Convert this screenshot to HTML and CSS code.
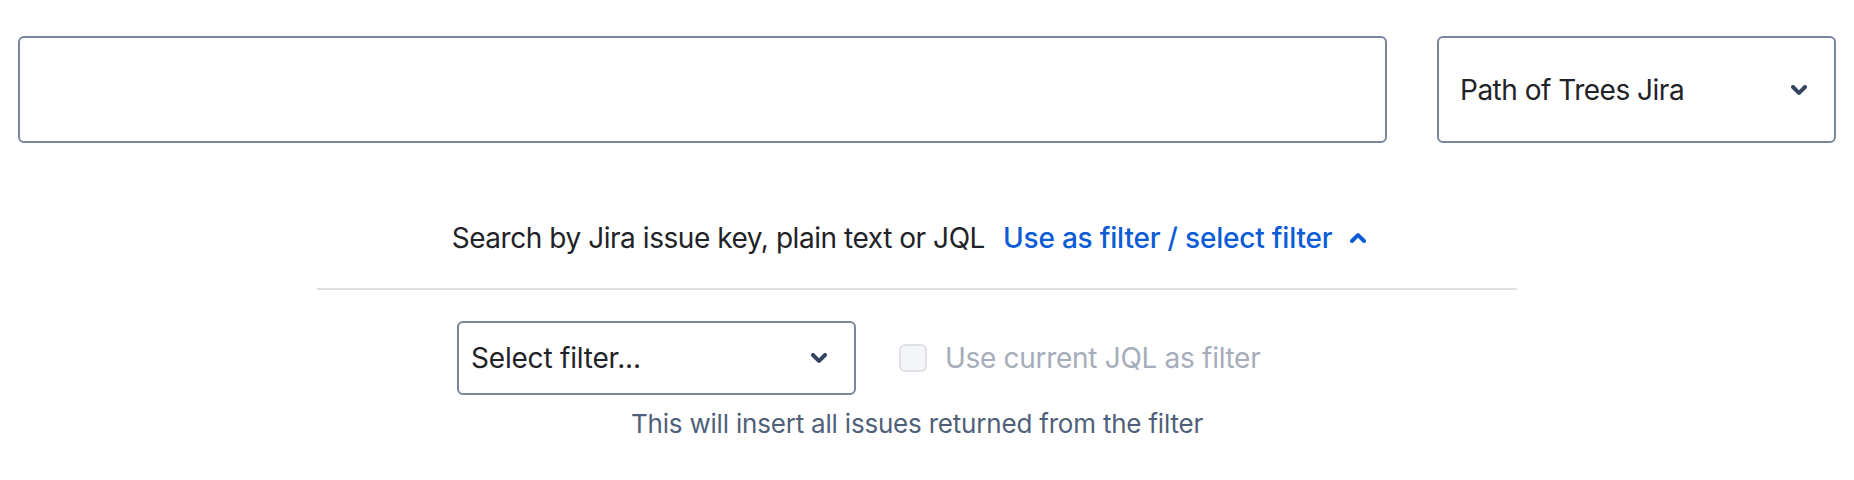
FILE: index.html
```html
<!DOCTYPE html>
<html lang="en">
<head>
<meta charset="utf-8">
<title>Jira issue search</title>
<link rel="stylesheet" href="styles.css">
</head>
<body>
<div class="page">
  <div class="top-row">
    <div class="search-input"></div>
    <div class="site-select">
      <span class="site-select__value">Path of Trees Jira</span>
      <svg class="chevron" viewBox="8 10 8 5" width="16" height="10" aria-hidden="true"><path d="M8.292 10.293a1.009 1.009 0 000 1.419l2.939 2.965c.218.215.5.322.779.322s.556-.107.769-.322l2.93-2.955a1.01 1.01 0 000-1.419.987.987 0 00-1.406 0l-2.298 2.317-2.307-2.327a.99.99 0 00-1.406 0z" fill="currentColor"/></svg>
    </div>
  </div>

  <div class="filter-section">
    <div class="hint-row">
      <span class="hint-text">Search by Jira issue key, plain text or JQL</span>
      <a class="hint-link" href="#">Use as filter / select filter</a>
      <span class="caret-box">
        <svg class="caret-up" viewBox="8 10 8 5" width="16" height="10" aria-hidden="true"><path d="M8.292 10.293a1.009 1.009 0 000 1.419l2.939 2.965c.218.215.5.322.779.322s.556-.107.769-.322l2.93-2.955a1.01 1.01 0 000-1.419.987.987 0 00-1.406 0l-2.298 2.317-2.307-2.327a.99.99 0 00-1.406 0z" fill="currentColor"/></svg>
      </span>
    </div>

    <div class="divider"></div>

    <div class="filter-row">
      <div class="filter-select">
        <span class="filter-select__value">Select filter...</span>
        <svg class="chevron" viewBox="8 10 8 5" width="16" height="10" aria-hidden="true"><path d="M8.292 10.293a1.009 1.009 0 000 1.419l2.939 2.965c.218.215.5.322.779.322s.556-.107.769-.322l2.93-2.955a1.01 1.01 0 000-1.419.987.987 0 00-1.406 0l-2.298 2.317-2.307-2.327a.99.99 0 00-1.406 0z" fill="currentColor"/></svg>
      </div>
      <label class="check">
        <span class="check__box"></span>
        <span class="check__label">Use current JQL as filter</span>
      </label>
    </div>

    <p class="help">This will insert all issues returned from the filter</p>
  </div>
</div>
</body>
</html>
```

FILE: styles.css
```css
* {
  box-sizing: border-box;
}

html, body {
  margin: 0;
  padding: 0;
  background: #ffffff;
}

body {
  font-family: Inter, "Noto Sans", "Liberation Sans", sans-serif;
  font-size: 28px;
  letter-spacing: -0.4px;
  color: #1f2328;
}

.page {
  padding: 36px 18px 0 18px;
}

.top-row {
  display: flex;
  gap: 50px;
}

.search-input {
  flex: 1;
  height: 107px;
  border: 2px solid #7a869a;
  border-radius: 6px;
  background: #fff;
}

.site-select {
  width: 399px;
  height: 107px;
  border: 2px solid #7a869a;
  border-radius: 6px;
  display: flex;
  align-items: center;
  justify-content: space-between;
  padding: 0 27px 0 21px;
}

.site-select__value {
  line-height: 40px;
  letter-spacing: -0.5px;
}

.chevron {
  display: block;
  color: #344563;
  flex: none;
}

.filter-section {
  margin: 75px 0 0 299px;
  width: 1200px;
}

.hint-row {
  display: flex;
  justify-content: center;
  align-items: center;
  line-height: 40px;
  height: 40px;
}

.hint-text {
  color: #1f2328;
  letter-spacing: -0.45px;
}

.hint-link {
  margin-left: 18px;
  color: #0b5cd5;
  font-weight: 500;
  letter-spacing: -0.2px;
  text-decoration: none;
}

.caret-box {
  width: 48px;
  height: 40px;
  display: flex;
  align-items: center;
  justify-content: center;
  margin-left: 2px;
  color: #0b5cd5;
}

.caret-up {
  display: block;
  transform: rotate(180deg);
}

.divider {
  height: 2px;
  background: #dfe1e6;
  margin-top: 30px;
}

.filter-row {
  display: flex;
  align-items: center;
  margin: 31px 0 0 140px;
}

.filter-select {
  width: 399px;
  height: 74px;
  border: 2px solid #7a869a;
  border-radius: 6px;
  display: flex;
  align-items: center;
  justify-content: space-between;
  padding: 0 27px 0 12px;
}

.filter-select__value {
  line-height: 40px;
  letter-spacing: -0.2px;
}

.check {
  display: flex;
  align-items: center;
  margin-left: 43px;
}

.check__box {
  width: 28px;
  height: 28px;
  border: 2px solid #dfe1e6;
  border-radius: 6px;
  background: #f4f5f7;
  flex: none;
}

.check__label {
  margin-left: 18px;
  color: #a5adba;
  line-height: 40px;
  letter-spacing: -0.3px;
}

.help {
  margin: 9px 0 0 0;
  text-align: center;
  font-size: 26px;
  letter-spacing: -0.2px;
  line-height: 40px;
  color: #505f79;
}
```
